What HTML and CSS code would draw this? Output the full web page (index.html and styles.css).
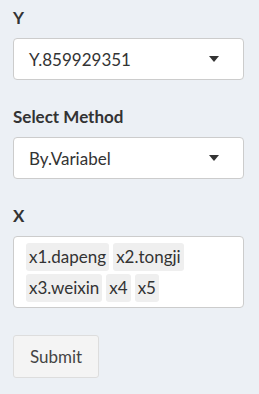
FILE: index.html
```html
<!DOCTYPE html>
<html lang="en">

<head>
    <meta charset="UTF-8">
    <title>Inputs</title>
    <link rel="stylesheet" href="styles.css">
</head>

<body>
    <div class="sidebar">

        <!-- Y -->
        <div class="form-group">
            <label>Y</label>
            <div class="select-box">
                <span>Y.859929351</span>
                <span class="caret"></span>
            </div>
        </div>

        <!-- Method -->
        <div class="form-group">
            <label>Select Method</label>
            <div class="select-box">
                <span>By.Variabel</span>
                <span class="caret"></span>
            </div>
        </div>

        <!-- X -->
        <div class="form-group">
            <label>X</label>
            <div class="multi-box">
                <span class="item">x1.dapeng</span>
                <span class="item">x2.tongji</span>
                <span class="item">x3.weixin</span>
                <span class="item">x4</span>
                <span class="item">x5</span>
            </div>
        </div>

        <button class="submit-button">Submit</button>
    </div>
</body>

</html>
```

FILE: styles.css
```css
* {
    margin: 0;
    padding: 0;
    box-sizing: border-box;
}

body {
    font-family: Lato, "Open Sans", sans-serif;
    background-color: #ecf0f5;
    color: #333;
}

.sidebar {
    padding: 6px 15px 0 13px;
}

.form-group {
    margin-bottom: 25px;
}

.form-group label {
    display: block;
    font-size: 17px;
    font-weight: bold;
    line-height: 24px;
    margin-bottom: 8px;
}

.select-box {
    display: flex;
    align-items: center;
    justify-content: space-between;
    height: 42px;
    padding: 0 24px 0 15px;
    background-color: white;
    border: 1px solid #cccccc;
    border-radius: 4px;
    font-size: 17px;
}

.caret {
    width: 0;
    height: 0;
    border-left: 5px solid transparent;
    border-right: 5px solid transparent;
    border-top: 6px solid #333;
}

.multi-box {
    display: flex;
    flex-wrap: wrap;
    gap: 3px 4px;
    padding: 6px 12px 5px 12px;
    background-color: white;
    border: 1px solid #cccccc;
    border-radius: 4px;
}

.multi-box .item {
    display: block;
    padding: 0 3px;
    height: 28px;
    line-height: 28px;
    font-size: 17px;
    background-color: #efefef;
    border-radius: 3px;
}

.submit-button {
    margin-top: 2px;
    padding: 0 16px;
    height: 43px;
    font-family: inherit;
    font-size: 17px;
    color: #444;
    background-color: #f4f4f4;
    border: 1px solid #dddddd;
    border-radius: 3px;
}
```
